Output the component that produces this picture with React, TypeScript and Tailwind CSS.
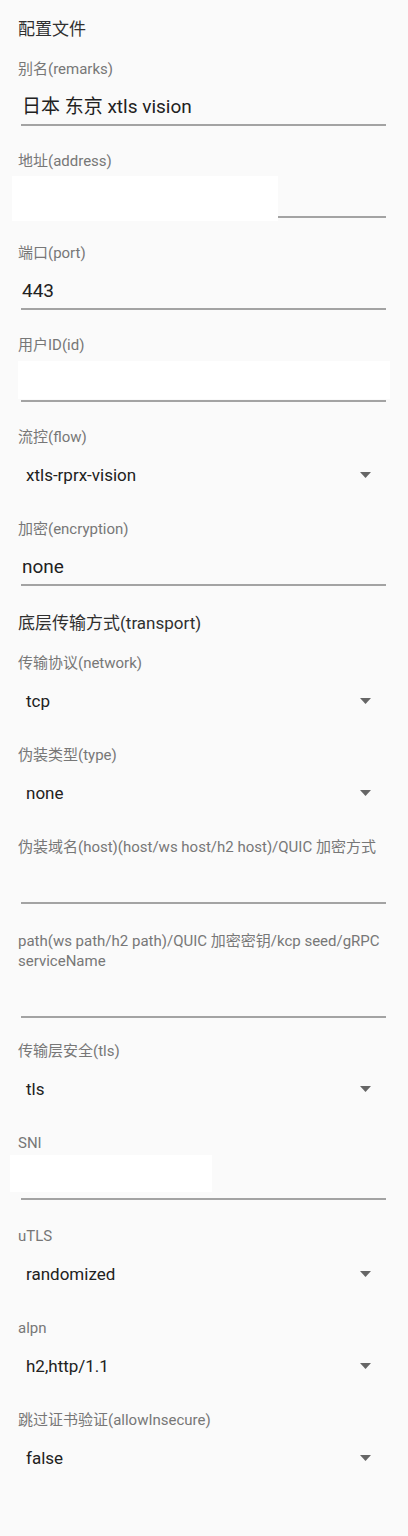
import React from "react";

const FONT = { fontFamily: 'Roboto, "Noto Sans CJK SC", sans-serif' };

function Arrow() {
  return (
    <svg width="11" height="6" viewBox="0 0 11 6" className="shrink-0">
      <polygon points="0,0 11,0 5.5,6" fill="#666666" />
    </svg>
  );
}

type Cover = { left: number; top: number; width: number; height: number } | null;

function TextField({
  label,
  value,
  cover,
  twoLine,
}: {
  label: React.ReactNode;
  value?: string;
  cover?: Cover;
  twoLine?: boolean;
}) {
  return (
    <div className={`relative ${twoLine ? "h-[110px]" : "h-[92px]"}`}>
      <div className="pl-[18px] pr-[16px] text-[15px] leading-[20px] text-[#777777]">{label}</div>
      <div className="mt-[11px] h-[34px] pl-[22px] text-[19px] leading-[34px] text-[#212121]">
        {value}
      </div>
      <div className="ml-[21px] mr-[22px] h-[2px] bg-[#a3a3a3]" />
      {cover && (
        <div
          className="absolute bg-white"
          style={{ left: cover.left, top: cover.top, width: cover.width, height: cover.height }}
        />
      )}
    </div>
  );
}

function SelectField({ label, value }: { label: string; value: string }) {
  return (
    <div className="h-[92px]">
      <div className="pl-[18px] text-[15px] leading-[20px] text-[#777777]">{label}</div>
      <div className="mt-[11px] flex h-[34px] items-center justify-between pl-[26px] pr-[37px]">
        <span className="text-[17px] leading-[34px] text-[#212121]">{value}</span>
        <Arrow />
      </div>
    </div>
  );
}

export default function App() {
  return (
    <div className="min-h-[1536px] w-[408px] bg-[#fafafa] pt-[17px]" style={FONT}>
      <div className="h-[24px] pl-[18px] text-[17px] leading-[24px] text-[#303030]">配置文件</div>
      <div className="mt-[18px]">
        <TextField label="别名(remarks)" value="日本 东京 xtls vision" />
        <TextField
          label="地址(address)"
          cover={{ left: 12, top: 25, width: 266, height: 45 }}
        />
        <TextField label="端口(port)" value="443" />
        <TextField
          label="用户ID(id)"
          cover={{ left: 18, top: 26, width: 372, height: 38 }}
        />
        <SelectField label="流控(flow)" value="xtls-rprx-vision" />
        <TextField label="加密(encryption)" value="none" />
      </div>
      <div className="h-[24px] pl-[18px] text-[17px] leading-[24px] text-[#303030]">
        底层传输方式(transport)
      </div>
      <div className="mt-[18px]">
        <SelectField label="传输协议(network)" value="tcp" />
        <SelectField label="伪装类型(type)" value="none" />
        <div className="h-[94px]">
          <TextField label="伪装域名(host)(host/ws host/h2 host)/QUIC 加密方式" />
        </div>
        <TextField
          twoLine
          label={
            <>
              path(ws path/h2 path)/QUIC 加密密钥/kcp seed/gRPC
              <br />
              serviceName
            </>
          }
        />
        <SelectField label="传输层安全(tls)" value="tls" />
        <div className="h-[93px]">
          <TextField label="SNI" cover={{ left: 10, top: 22, width: 202, height: 37 }} />
        </div>
        <SelectField label="uTLS" value="randomized" />
        <SelectField label="alpn" value="h2,http/1.1" />
        <SelectField label="跳过证书验证(allowInsecure)" value="false" />
      </div>
    </div>
  );
}
